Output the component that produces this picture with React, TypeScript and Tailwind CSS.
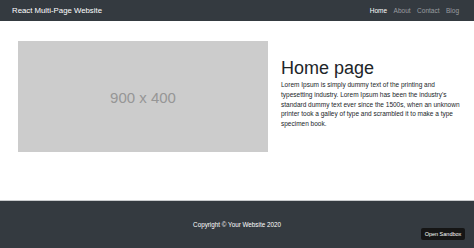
const navLinks = ["Home", "About", "Contact", "Blog"];

export default function App() {
  return (
    <div
      className="flex h-[248px] w-[474px] flex-col bg-white"
      style={{ fontFamily: '"Liberation Sans", Arial, sans-serif' }}
    >
      <header className="flex h-[21px] items-center justify-between bg-[#343a40] pl-[12px] pr-[15px]">
        <span className="text-[7.8px] text-white">React Multi-Page Website</span>
        <nav className="flex items-center gap-[6.5px] text-[6.5px]">
          {navLinks.map((l) => (
            <a key={l} className={l === "Home" ? "text-white" : "text-[#9a9da1]"}>
              {l}
            </a>
          ))}
        </nav>
      </header>

      <main className="flex flex-1 items-start gap-[13px] pl-[18px] pr-[8px] pt-[20px]">
        <div className="flex h-[111px] w-[250px] shrink-0 items-center justify-center bg-[#cccccc]">
          <span className="mt-[3px] text-[15px] text-[#969696]">900 x 400</span>
        </div>
        <div className="pt-[16px]">
          <h1 className="text-[18px] leading-[22px] text-[#212529]">Home page</h1>
          <p className="mt-[1px] text-[6.5px] leading-[9.8px] text-[#212529]">
            Lorem Ipsum is simply dummy text of the printing and typesetting industry. Lorem Ipsum has
            been the industry's standard dummy text ever since the 1500s, when an unknown printer took a
            galley of type and scrambled it to make a type specimen book.
          </p>
        </div>
      </main>

      <footer className="flex h-[48px] items-center justify-center border-t border-[#c9cbcd] bg-[#343a40]">
        <p className="text-[6.3px] text-white">Copyright © Your Website 2020</p>
      </footer>

      <div className="absolute left-[421px] top-[228px] flex h-[12px] w-[44px] items-center justify-center rounded-[2px] bg-[#151515] text-[5.5px] text-white">
        Open Sandbox
      </div>
    </div>
  );
}
